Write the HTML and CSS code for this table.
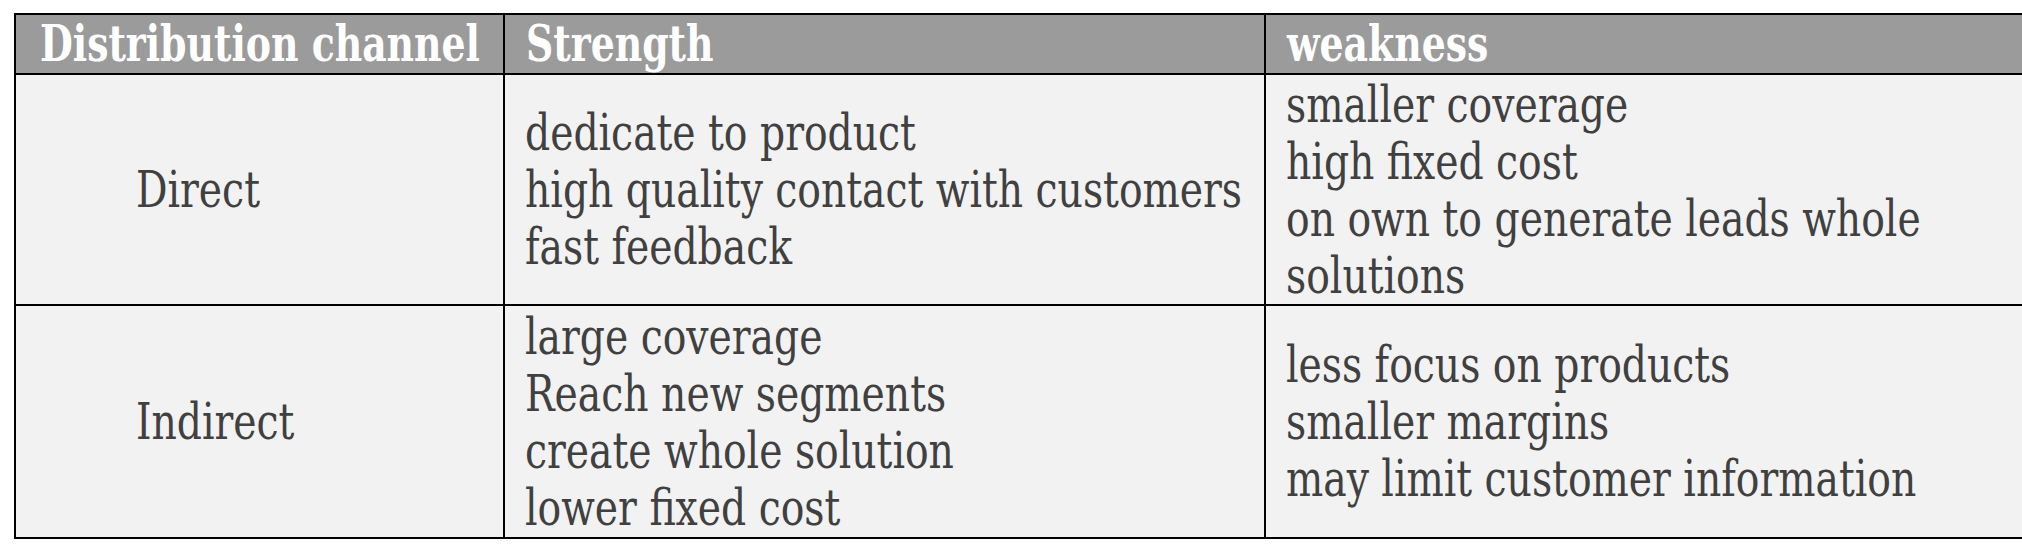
FILE: index.html
```html
<!DOCTYPE html>
<html>
<head>
<meta charset="utf-8">
<link rel="stylesheet" href="styles.css">
</head>
<body>
<div class="sheet">
  <div class="grid">
    <div class="cell head c1"><span class="ln">Distribution channel</span></div>
    <div class="cell head c2"><span class="ln">Strength</span></div>
    <div class="cell head c3"><span class="ln">weakness</span></div>

    <div class="cell body c1"><span class="ln">Direct</span></div>
    <div class="cell body c2">
      <span class="ln">dedicate to product</span>
      <span class="ln">high quality contact with customers</span>
      <span class="ln">fast feedback</span>
    </div>
    <div class="cell body c3">
      <span class="ln">smaller coverage</span>
      <span class="ln">high fixed cost</span>
      <span class="ln">on own to generate leads whole</span>
      <span class="ln">solutions</span>
    </div>

    <div class="cell body c1"><span class="ln">Indirect</span></div>
    <div class="cell body c2">
      <span class="ln">large coverage</span>
      <span class="ln">Reach new segments</span>
      <span class="ln">create whole solution</span>
      <span class="ln">lower fixed cost</span>
    </div>
    <div class="cell body c3">
      <span class="ln">less focus on products</span>
      <span class="ln">smaller margins</span>
      <span class="ln">may limit customer information</span>
    </div>
  </div>
</div>
</body>
</html>
```

FILE: styles.css
```css
html, body {
  margin: 0;
  padding: 0;
  background: #ffffff;
  overflow: hidden;
}
.sheet {
  width: 2022px;
  height: 546px;
  overflow: hidden;
  padding: 13px 0 0 14px;
  box-sizing: border-box;
}
.grid {
  display: grid;
  grid-template-columns: 487px 759px 800px;
  grid-template-rows: 58px 229px 231px;
  gap: 2px;
  padding: 2px 0 2px 2px;
  background: #000000;
  width: max-content;
  font-family: "DejaVu Serif", serif;
  font-stretch: condensed;
}
.cell {
  display: flex;
  flex-direction: column;
  justify-content: center;
  white-space: nowrap;
  overflow: hidden;
}
.ln {
  display: block;
  transform-origin: 0 50%;
}
.head {
  background: #9b9b9b;
  color: #ffffff;
  font-weight: bold;
  font-size: 42px;
  line-height: 58px;
  padding-left: 24px;
}
.head .ln {
  transform: scaleY(1.2);
}
.head.c2, .head.c3 {
  padding-left: 21px;
}
.body {
  background: #f2f2f2;
  color: #404040;
  font-size: 43.7px;
  line-height: 57px;
  padding-left: 20px;
}
.body .ln {
  transform: scaleY(1.16);
}
.body.c1 {
  padding-left: 120px;
}
```
